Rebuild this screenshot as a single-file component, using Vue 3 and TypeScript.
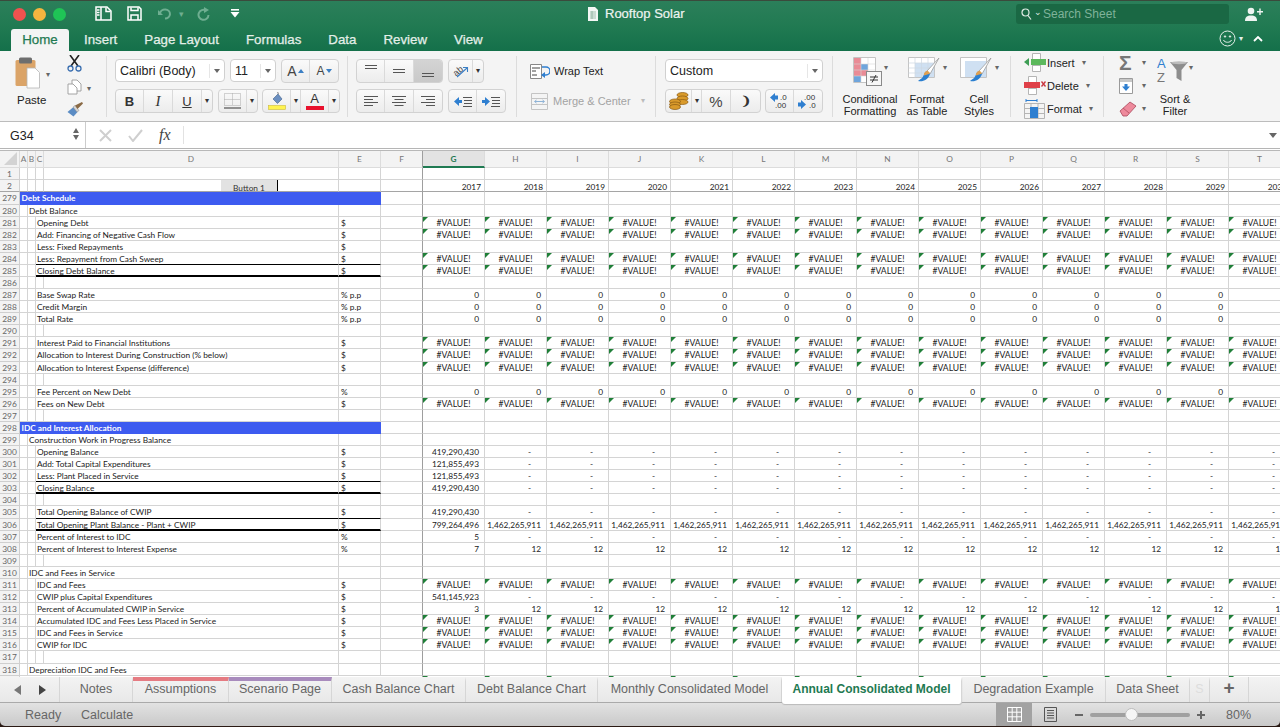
<script setup lang="ts">
interface Row {
  n: number
  band?: boolean
  level?: 'b' | 'c'
  label?: string
  unit?: string
  values?: string[]
  line?: 'thin' | 'thick'
}

const letters = ['G', 'H', 'I', 'J', 'K', 'L', 'M', 'N', 'O', 'P', 'Q', 'R', 'S', 'T']
const years = letters.map((_, i) => String(2017 + i))

// first value in column G, the rest repeat
const fill = (first: string, rest: string = first): string[] => [first, ...Array(13).fill(rest)]
const errs = fill('#VALUE!')
const zeros = [...Array(13).fill('0'), '']

const rows: Row[] = [
  { n: 279, band: true, label: 'Debt Schedule' },
  { n: 280, level: 'b', label: 'Debt Balance' },
  { n: 281, level: 'c', label: 'Opening Debt', unit: '$', values: errs },
  { n: 282, level: 'c', label: 'Add: Financing of Negative Cash Flow', unit: '$', values: errs },
  { n: 283, level: 'c', label: 'Less: Fixed Repayments', unit: '$' },
  { n: 284, level: 'c', label: 'Less: Repayment from Cash Sweep', unit: '$', values: errs, line: 'thin' },
  { n: 285, level: 'c', label: 'Closing Debt Balance', unit: '$', values: errs, line: 'thick' },
  { n: 286 },
  { n: 287, level: 'c', label: 'Base Swap Rate', unit: '% p.p', values: zeros },
  { n: 288, level: 'c', label: 'Credit Margin', unit: '% p.p', values: zeros },
  { n: 289, level: 'c', label: 'Total Rate', unit: '% p.p', values: zeros },
  { n: 290 },
  { n: 291, level: 'c', label: 'Interest Paid to Financial Institutions', unit: '$', values: errs },
  { n: 292, level: 'c', label: 'Allocation to Interest During Construction (% below)', unit: '$', values: errs },
  { n: 293, level: 'c', label: 'Allocation to Interest Expense (difference)', unit: '$', values: errs },
  { n: 294 },
  { n: 295, level: 'c', label: 'Fee Percent on New Debt', unit: '%', values: zeros },
  { n: 296, level: 'c', label: 'Fees on New Debt', unit: '$', values: errs },
  { n: 297 },
  { n: 298, band: true, label: 'IDC and Interest Allocation' },
  { n: 299, level: 'b', label: 'Construction Work in Progress Balance' },
  { n: 300, level: 'c', label: 'Opening Balance', unit: '$', values: fill('419,290,430', '-') },
  { n: 301, level: 'c', label: 'Add: Total Capital Expenditures', unit: '$', values: fill('121,855,493', '-') },
  { n: 302, level: 'c', label: 'Less: Plant Placed in Service', unit: '$', values: fill('121,855,493', '-'), line: 'thin' },
  { n: 303, level: 'c', label: 'Closing Balance', unit: '$', values: fill('419,290,430', '-'), line: 'thick' },
  { n: 304 },
  { n: 305, level: 'c', label: 'Total Opening Balance of CWIP', unit: '$', values: fill('419,290,430', '-'), line: 'thin' },
  { n: 306, level: 'c', label: 'Total Opening Plant Balance - Plant + CWIP', unit: '$', values: fill('799,264,496', '1,462,265,911'), line: 'thick' },
  { n: 307, level: 'c', label: 'Percent of Interest to IDC', unit: '%', values: fill('5', '-') },
  { n: 308, level: 'c', label: 'Percent of Interest to Interest Expense', unit: '%', values: fill('7', '12') },
  { n: 309 },
  { n: 310, level: 'b', label: 'IDC and Fees in Service' },
  { n: 311, level: 'c', label: 'IDC and Fees', unit: '$', values: errs },
  { n: 312, level: 'c', label: 'CWIP plus Capital Expenditures', unit: '$', values: fill('541,145,923', '-') },
  { n: 313, level: 'c', label: 'Percent of Accumulated CWIP in Service', unit: '$', values: fill('3', '12') },
  { n: 314, level: 'c', label: 'Accumulated IDC and Fees Less Placed in Service', unit: '$', values: errs },
  { n: 315, level: 'c', label: 'IDC and Fees in Service', unit: '$', values: errs },
  { n: 316, level: 'c', label: 'CWIP for IDC', unit: '$', values: errs },
  { n: 317 },
  { n: 318, level: 'b', label: 'Depreciation IDC and Fees' },
]

const valueAt = (row: Row, i: number): string => (row.values ? row.values[i] : '')

const cellClass = (val: string) => ({
  err: val === '#VALUE!',
  dash: val === '-',
})

const menuTabs = ['Insert', 'Page Layout', 'Formulas', 'Data', 'Review', 'View']

const sheets = [
  { name: 'Notes', width: 73 },
  { name: 'Assumptions', width: 96, color: '#e57b82' },
  { name: 'Scenario Page', width: 103, color: '#a88bbd' },
  { name: 'Cash Balance Chart', width: 134 },
  { name: 'Debt Balance Chart', width: 132 },
  { name: 'Monthly Consolidated Model', width: 184 },
  { name: 'Annual Consolidated Model', width: 180, active: true },
  { name: 'Degradation Example', width: 144 },
  { name: 'Data Sheet', width: 84 },
]
</script>

<template>
  <div class="app">
    <header class="title-bar">
      <div class="lights">
        <span class="light red"></span>
        <span class="light yellow"></span>
        <span class="light green"></span>
      </div>
      <div class="quick">
        <svg width="17" height="15" viewBox="0 0 17 15" fill="none" stroke="#fff" stroke-width="1.5">
          <path d="M1 1h11l4 4v9H1z" />
          <path d="M6 1v13M2 4h2.500M2 6.500h2.500M2 9h2.500M11 1.500v4h4.500" />
        </svg>
        <svg class="q-save" width="15" height="15" viewBox="0 0 15 15" fill="none" stroke="#fff" stroke-width="1.500">
          <path d="M1 1h11l2 2v11H1z" />
          <path d="M4 1.500v3h7v-3M4 14V9h7v5" />
        </svg>
        <svg class="q-undo" width="17" height="13" viewBox="0 0 17 13" fill="none" stroke="#6fae91" stroke-width="2">
          <path d="M3 6.500a5 4.500 0 1 1 5 5" />
          <path d="M1 3v5h5z" fill="#6fae91" stroke="none" />
        </svg>
        <span class="q-caret">▾</span>
        <svg class="q-redo" width="13" height="14" viewBox="0 0 13 14" fill="none" stroke="#6fae91" stroke-width="2">
          <path d="M9 3.500a5 5 0 1 0 2.500 4.500" />
          <path d="M7 0v6l5-3z" fill="#6fae91" stroke="none" />
        </svg>
        <svg class="q-more" width="10" height="9" viewBox="0 0 10 9" fill="#fff">
          <rect x="1" y="0" width="8" height="1.600" />
          <path d="M0.500 3h9L5 8.500z" />
        </svg>
      </div>
      <div class="doc-title">
        <svg width="10" height="14" viewBox="0 0 10 14">
          <path d="M0 0h7l3 3v11H0z" fill="#f4f7f5" />
          <path d="M2 5h6M2 7h6M2 9h6M2 11h6M4 4v8" stroke="#7ea892" stroke-width="0.700" />
        </svg>
        <span>Rooftop Solar</span>
      </div>
      <div class="search">
        <svg width="11" height="12" viewBox="0 0 11 12" fill="none" stroke="#dfeae4" stroke-width="1.200">
          <circle cx="4.500" cy="4.500" r="3.500" />
          <path d="M7 7.500l3 4" />
        </svg>
        <span class="search-caret">⌄</span>
        <span class="search-text">Search Sheet</span>
      </div>
      <svg class="add-person" width="18" height="14" viewBox="0 0 18 14" fill="#eef4f1">
        <circle cx="6" cy="4" r="3.300" />
        <path d="M0 14c0-4 2-5.500 6-5.500s6 1.500 6 5.500z" />
        <path d="M12 4h2.300V1.500h1.400V4H18v1.400h-2.300V8h-1.400V5.400H12z" />
      </svg>
    </header>

    <nav class="menu-bar">
      <span class="menu-tab active">Home</span>
      <span v-for="tab in menuTabs" :key="tab" class="menu-tab">{{ tab }}</span>
      <div class="menu-right">
        <svg width="17" height="17" viewBox="0 0 17 17" fill="none" stroke="#e6f0eb" stroke-width="1">
          <circle cx="8.500" cy="8.500" r="7.500" />
          <circle cx="6" cy="6.500" r="0.700" fill="#e6f0eb" />
          <circle cx="11" cy="6.500" r="0.700" fill="#e6f0eb" />
          <path d="M4.500 10c1 3 7 3 8 0" />
        </svg>
        <span class="mini-caret">▾</span>
        <svg class="chev" width="10" height="6" viewBox="0 0 10 6" fill="none" stroke="#fff" stroke-width="1.800">
          <path d="M1 5l4-4 4 4" />
        </svg>
      </div>
    </nav>

    <section class="ribbon">
      <div class="group g-paste">
        <div class="paste">
          <svg width="25" height="32" viewBox="0 0 25 32">
            <rect x="0.500" y="3" width="20" height="26" rx="1.500" fill="#dba468" />
            <rect x="4" y="0.500" width="13" height="6" rx="1.500" fill="#6e6e6e" />
            <path d="M12 11h8l4.500 4.500V31H12z" fill="#fff" stroke="#b5b5b5" stroke-width="0.800" />
          </svg>
          <span class="caret paste-caret">▾</span>
          <span class="paste-label">Paste</span>
        </div>
        <div class="clip-tools">
          <svg width="15" height="17" viewBox="0 0 15 17" fill="none">
            <path d="M3 0l8 11M12 0L4 11" stroke="#222" stroke-width="1.600" />
            <circle cx="3.500" cy="13.500" r="2.500" stroke="#3b6fb0" stroke-width="1.300" />
            <circle cx="11.500" cy="13.500" r="2.500" stroke="#3b6fb0" stroke-width="1.300" />
          </svg>
          <div class="copy-row">
            <svg width="15" height="16" viewBox="0 0 15 16" fill="#fff" stroke="#9a9a9a" stroke-width="0.900">
              <path d="M5 1h5l4 4v7H5z" />
              <path d="M1 5h5l4 4v6H1z" />
            </svg>
            <span class="caret">▾</span>
          </div>
          <svg width="17" height="15" viewBox="0 0 17 15">
            <path d="M0.500 10l6-5 4 5-4 4.500z" fill="#5b8cc4" />
            <path d="M6 5l4 5 2-1.500-4-5z" fill="#d6d6d6" stroke="#888" stroke-width="0.500" />
            <path d="M8 3.500l7-3.500 1 1.500-5.500 5.500z" fill="#8a6a45" />
          </svg>
        </div>
      </div>

      <div class="group g-font">
        <div class="line">
          <div class="select font-name"><span>Calibri (Body)</span><i class="sel-arrow"></i></div>
          <div class="select font-size"><span>11</span><i class="sel-arrow"></i></div>
          <div class="btns">
            <span class="btn w29 size-btn big">A<b class="up"></b></span>
            <span class="btn w29 size-btn">A<b class="down"></b></span>
          </div>
        </div>
        <div class="line">
          <div class="btns">
            <span class="btn w29 fmt bold">B</span>
            <span class="btn w30 fmt ital">I</span>
            <span class="btn w30 fmt under">U</span>
            <span class="btn w10 caret">▾</span>
          </div>
          <div class="btns">
            <span class="btn w29">
              <svg width="17" height="16" viewBox="0 0 17 16" fill="none">
                <path d="M0.500 0.500h16v12h-16zM8.500 0.500v12M0.500 6.500h16" stroke="#aaa" stroke-dasharray="1 1" />
                <path d="M0 15h17" stroke="#333" stroke-width="1.200" />
              </svg>
            </span>
            <span class="btn w10 caret">▾</span>
          </div>
          <div class="btns pull">
            <span class="btn w29">
              <svg width="18" height="18" viewBox="0 0 18 18">
                <path d="M5 7l5-5 4 5-4.500 4.500z" fill="#6b8fc0" stroke="#3f5f8a" stroke-width="0.600" />
                <path d="M9 1l1-1 1 2z" fill="#555" />
                <rect x="0.500" y="13.500" width="17" height="4" fill="#fff34f" stroke="#cdbb3a" stroke-width="0.600" />
              </svg>
            </span>
            <span class="btn w10 caret">▾</span>
            <span class="btn w29 color-a">A<i></i></span>
            <span class="btn w10 caret">▾</span>
          </div>
        </div>
      </div>

      <div class="group g-align">
        <div class="line">
          <div class="btns">
            <span class="btn w29"><svg width="14" height="14" viewBox="0 0 14 14" stroke="#555"><path d="M1 1.500h12M1 4.500h12" /></svg></span>
            <span class="btn w30"><svg width="14" height="14" viewBox="0 0 14 14" stroke="#555"><path d="M1 5.500h12M1 8.500h12" /></svg></span>
            <span class="btn w29 pressed"><svg width="14" height="14" viewBox="0 0 14 14" stroke="#555"><path d="M1 9.500h12M1 12.500h12" /></svg></span>
          </div>
          <div class="btns">
            <span class="btn w24">
              <svg width="17" height="16" viewBox="0 0 17 16" fill="none">
                <text x="1" y="11" transform="rotate(-40 6 8)" class="ab">ab</text>
                <path d="M5 14L15 5M11 4.500h4.500V9" stroke="#3b7fc4" stroke-width="1.100" />
              </svg>
            </span>
            <span class="btn w10 caret">▾</span>
          </div>
        </div>
        <div class="line">
          <div class="btns">
            <span class="btn w29"><svg width="16" height="12" viewBox="0 0 16 12" stroke="#555"><path d="M1 1.500h14M1 4.500h9M1 7.500h14M1 10.500h9" /></svg></span>
            <span class="btn w30"><svg width="16" height="12" viewBox="0 0 16 12" stroke="#555"><path d="M1 1.500h14M3.500 4.500h9M1 7.500h14M3.500 10.500h9" /></svg></span>
            <span class="btn w29"><svg width="16" height="12" viewBox="0 0 16 12" stroke="#555"><path d="M1 1.500h14M6 4.500h9M1 7.500h14M6 10.500h9" /></svg></span>
          </div>
          <div class="btns">
            <span class="btn w29">
              <svg width="18" height="11" viewBox="0 0 18 11">
                <path d="M0 5.500L5 1v3h3v3H5v3z" fill="#2f7fd0" />
                <path d="M9 1.500h9M10 4.500h8M10 7.500h8M9 10.500h9" stroke="#555" />
              </svg>
            </span>
            <span class="btn w29">
              <svg width="18" height="11" viewBox="0 0 18 11">
                <path d="M8 5.500L3 1v3H0v3h3v3z" fill="#2f7fd0" />
                <path d="M9 1.500h9M10 4.500h8M10 7.500h8M9 10.500h9" stroke="#555" />
              </svg>
            </span>
          </div>
        </div>
      </div>

      <div class="group g-wrap">
        <div class="wrap-row">
          <svg width="20" height="17" viewBox="0 0 20 17" fill="none">
            <path d="M0.500 1.500h11v14h-11z" stroke="#888" fill="#fff" />
            <path d="M2 5h8M2 8h4M2 12h5" stroke="#444" />
            <path d="M12 4h4a3 3 0 0 1 0 8h-2" stroke="#2f7fd0" stroke-width="1.500" />
            <path d="M15 9l-4 3 4 3z" fill="#2f7fd0" />
          </svg>
          <span>Wrap Text</span>
        </div>
        <div class="wrap-row merge">
          <svg width="17" height="17" viewBox="0 0 17 17" fill="none">
            <path d="M0.500 0.500h16v16h-16zM0.500 5.500h16M0.500 11.500h16" stroke="#c4c4c4" />
            <path d="M4 8.500h9M5.500 7l-2 1.500 2 1.500M11.500 7l2 1.500-2 1.500" stroke="#8fb3d6" />
          </svg>
          <span>Merge &amp; Center</span>
          <span class="caret merge-caret">▾</span>
        </div>
      </div>

      <div class="group g-number">
        <div class="line">
          <div class="select num-format"><span>Custom</span><i class="sel-arrow"></i></div>
        </div>
        <div class="line tight">
          <div class="btns">
            <span class="btn w26">
              <svg width="20" height="18" viewBox="0 0 20 18" fill="#d99a2b" stroke="#8a5a12" stroke-width="0.700">
                <ellipse cx="13.500" cy="3" rx="5.500" ry="2.500" />
                <ellipse cx="13.500" cy="6.500" rx="5.500" ry="2.500" />
                <ellipse cx="13.500" cy="10" rx="5.500" ry="2.500" />
                <ellipse cx="6" cy="9.500" rx="5.500" ry="2.500" />
                <ellipse cx="6" cy="12.500" rx="5.500" ry="2.500" />
                <ellipse cx="6" cy="15" rx="5.500" ry="2.500" />
              </svg>
            </span>
            <span class="btn w10 caret">▾</span>
            <span class="btn w30 pct">%</span>
            <span class="btn w30 comma">❩</span>
          </div>
          <div class="btns">
            <span class="btn w29 dec">
              <svg width="20" height="16" viewBox="0 0 20 16">
                <path d="M0 4.500L5 0v2.500h3v4H5V9z" fill="#2f7fd0" />
                <text x="10" y="7" class="dec-t">.0</text>
                <text x="5" y="15" class="dec-t">.00</text>
              </svg>
            </span>
            <span class="btn w29 dec">
              <svg width="20" height="16" viewBox="0 0 20 16">
                <text x="6" y="6.500" class="dec-t">.00</text>
                <path d="M8 11.500L3 7v2.500H0v4h3V16z" fill="#2f7fd0" />
                <text x="11" y="15" class="dec-t">.0</text>
              </svg>
            </span>
          </div>
        </div>
      </div>

      <div class="group g-styles">
        <div class="style-item s-cond">
          <div class="style-icon">
            <svg width="29" height="29" viewBox="0 0 29 29">
              <path d="M0.500 0.500h22v25h-22z" fill="#fff" stroke="#c4c4c4" />
              <rect x="1" y="1" width="7" height="6" fill="#e98b96" />
              <rect x="8" y="7" width="7" height="6" fill="#6fa5dc" />
              <rect x="1" y="7" width="7" height="6" fill="#e98b96" />
              <rect x="1" y="13" width="14" height="6" fill="#e98b96" />
              <rect x="1" y="19" width="7" height="6" fill="#6fa5dc" />
              <path d="M8 1v24M15 1v24M1 7h21M1 13h21M1 19h21" stroke="#d6d6d6" stroke-width="0.600" />
              <rect x="13.500" y="14.500" width="15" height="14" fill="#f7f7f7" stroke="#8a8a8a" />
              <path d="M17 20h8M17 23h8M23 18l-4 7.500" stroke="#333" fill="none" />
            </svg>
            <span class="caret">▾</span>
          </div>
          <span class="style-label">Conditional<br />Formatting</span>
        </div>
        <div class="style-item s-table">
          <div class="style-icon">
            <svg width="33" height="30" viewBox="0 0 33 30">
              <path d="M0.500 1.500h26v20h-26z" fill="#fff" stroke="#c4c4c4" />
              <rect x="7" y="7" width="19" height="14" fill="#cfe0f2" />
              <path d="M7 1.500v20M13.500 1.500v20M20 1.500v20M0.500 7h26M0.500 12h26M0.500 17h26" stroke="#cdd7e2" stroke-width="0.700" />
              <path d="M31 2L19 15l3 3z" fill="#fff" stroke="#9a9a9a" stroke-width="0.800" />
              <path d="M19 15c-3 1-3 5-5 7-1 1-3 2-4 3 5 1 10-1 12-7z" fill="#2b7fd0" />
              <path d="M19.500 14.500c-3 1-4 3-3.500 5l5-1.500 1-1z" fill="#e0a050" />
            </svg>
            <span class="caret">▾</span>
          </div>
          <span class="style-label">Format<br />as Table</span>
        </div>
        <div class="style-item s-cell">
          <div class="style-icon">
            <svg width="33" height="30" viewBox="0 0 33 30">
              <path d="M0.500 1.500h26v20h-26z" fill="#fff" stroke="#c4c4c4" />
              <rect x="5" y="5" width="21" height="16" fill="#cfe0f2" />
              <path d="M31 2L19 15l3 3z" fill="#fff" stroke="#9a9a9a" stroke-width="0.800" />
              <path d="M19 15c-3 1-3 5-5 7-1 1-3 2-4 3 5 1 10-1 12-7z" fill="#2b7fd0" />
              <path d="M19.500 14.500c-3 1-4 3-3.500 5l5-1.500 1-1z" fill="#e0a050" />
            </svg>
            <span class="caret">▾</span>
          </div>
          <span class="style-label">Cell<br />Styles</span>
        </div>
      </div>

      <div class="group g-cells">
        <div class="cell-row">
          <svg width="23" height="20" viewBox="0 0 23 20" fill="none">
            <path d="M8.500 0.500h8v18h-8zM8.500 6.500h8M8.500 12.500h8" stroke="#b5b5b5" fill="#fff" />
            <rect x="7" y="6" width="15" height="6" fill="#5cb85c" />
            <path d="M0 9l5-4v8z" fill="#3f9e55" />
          </svg>
          <span>Insert</span><span class="caret">▾</span>
        </div>
        <div class="cell-row">
          <svg width="23" height="20" viewBox="0 0 23 20" fill="none">
            <path d="M4.500 0.500h8v18h-8zM4.500 12.500h8" stroke="#b5b5b5" fill="#fff" />
            <rect x="0" y="6" width="16" height="6" fill="#df4048" />
            <path d="M17.500 5.500l4 5M21.500 5.500l-4 5" stroke="#c9343c" stroke-width="1.300" />
          </svg>
          <span>Delete</span><span class="caret">▾</span>
        </div>
        <div class="cell-row">
          <svg width="23" height="20" viewBox="0 0 23 20" fill="none">
            <path d="M0.500 4.500h20v15h-20zM7 4.500v15M14 4.500v15M0.500 9.500h20M0.500 14.500h20" stroke="#b5b5b5" />
            <rect x="6" y="8" width="8" height="11" fill="#2f7fd0" />
            <path d="M2 1.500h11M2 0v3M13 0v3" stroke="#2f7fd0" />
          </svg>
          <span>Format</span><span class="caret">▾</span>
        </div>
      </div>

      <div class="group g-edit">
        <div class="edit-tools">
          <div class="edit-row">
            <span class="sigma">Σ</span><span class="caret">▾</span>
          </div>
          <div class="edit-row">
            <svg width="14" height="16" viewBox="0 0 14 16" fill="none">
              <path d="M0.500 0.500h13v15h-13z" fill="#fff" stroke="#9a9a9a" />
              <rect x="1" y="1" width="12" height="3" fill="#c8c8c8" />
              <path d="M7 13L3 8.500h2.500V6h3v2.500H11z" fill="#2f7fd0" />
            </svg>
            <span class="caret">▾</span>
          </div>
          <div class="edit-row">
            <svg width="18" height="16" viewBox="0 0 18 16">
              <path d="M1 10L11 1l6 4-9 10H4z" fill="#ee8a9c" stroke="#a9475a" stroke-width="0.800" />
              <path d="M4 7l6 5" stroke="#a9475a" stroke-width="0.700" />
            </svg>
            <span class="caret">▾</span>
          </div>
        </div>
        <div class="sort">
          <div class="sort-icon">
            <span class="az"><b>A</b><em>Z</em></span>
            <svg width="18" height="21" viewBox="0 0 18 21">
              <path d="M0 1h18l-6.500 8v11l-5-3V9z" fill="#8d8d8d" />
              <ellipse cx="9" cy="1.800" rx="8" ry="1.500" fill="#bdbdbd" />
            </svg>
            <span class="caret">▾</span>
          </div>
          <span class="style-label">Sort &amp;<br />Filter</span>
        </div>
      </div>
    </section>

    <div class="formula-bar">
      <div class="name-box">
        <span>G34</span>
        <span class="stepper"><i></i><i class="dn"></i></span>
      </div>
      <svg class="fb-x" width="13" height="13" viewBox="0 0 13 13" stroke="#cfcfcf" stroke-width="2"><path d="M1 1l11 11M12 1L1 12" /></svg>
      <svg class="fb-check" width="15" height="13" viewBox="0 0 15 13" fill="none" stroke="#cfcfcf" stroke-width="2"><path d="M1 7l4 5 9-11" /></svg>
      <span class="fx">fx</span>
      <span class="fb-arrow"></span>
    </div>
    <div class="fb-gap"></div>

    <main class="sheet">
      <div class="row head">
        <div class="c rh corner"><i></i></div>
        <div class="c w8">A</div>
        <div class="c w8">B</div>
        <div class="c w8">C</div>
        <div class="c wd">D</div>
        <div class="c we">E</div>
        <div class="c wf">F</div>
        <div v-for="(l, i) in letters" :key="l" class="c wv" :class="{ sel: i === 0 }">{{ l }}</div>
      </div>

      <div class="row">
        <div class="c rh">1</div>
        <div class="c w8"></div>
        <div class="c w8"></div>
        <div class="c w8"></div>
        <div class="c wd"></div>
        <div class="c we"></div>
        <div class="c wf freeze"></div>
        <div v-for="l in letters" :key="l" class="c wv"></div>
      </div>
      <div class="row frozen-end">
        <div class="c rh">2</div>
        <div class="c w8"></div>
        <div class="c w8"></div>
        <div class="c w8"></div>
        <div class="c wd button-cell"><span class="sheet-button">Button 1</span></div>
        <div class="c we"></div>
        <div class="c wf freeze"></div>
        <div v-for="y in years" :key="y" class="c wv year">{{ y }}</div>
      </div>

      <div v-for="row in rows" :key="row.n" class="row">
        <div class="c rh">{{ row.n }}</div>
        <template v-if="row.band">
          <div class="c band">{{ row.label }}</div>
        </template>
        <template v-else>
          <div class="c w8"></div>
          <template v-if="row.level === 'b'">
            <div class="c text span-b">{{ row.label }}</div>
          </template>
          <template v-else-if="row.level === 'c'">
            <div class="c w8"></div>
            <div class="c text span-c" :class="row.line">{{ row.label }}</div>
          </template>
          <template v-else>
            <div class="c w8"></div>
            <div class="c w8"></div>
            <div class="c wd"></div>
          </template>
          <div class="c we unit" :class="row.line">{{ row.unit }}</div>
        </template>
        <div class="c wf freeze"></div>
        <div v-for="(_, i) in letters" :key="i" class="c wv val" :class="cellClass(valueAt(row, i))">{{ valueAt(row, i) }}</div>
      </div>

      <!-- only the error ticks of the next row still show above the tabs -->
      <div class="row">
        <div class="c rh"></div>
        <div class="c gutter"></div>
        <div v-for="l in letters" :key="l" class="c wv val err"></div>
      </div>
    </main>

    <div class="sheet-tabs">
      <div class="tab-nav">
        <i class="nav-l"></i>
        <i class="nav-r"></i>
      </div>
      <div
        v-for="s in sheets"
        :key="s.name"
        class="sheet-tab"
        :class="{ active: s.active }"
        :style="{ width: s.width + 'px', borderTopColor: s.color || 'transparent' }"
      >{{ s.name }}</div>
      <div class="sheet-tab faded">S</div>
      <div class="tab-add">+</div>
    </div>

    <footer class="status">
      <span class="st-ready">Ready</span>
      <span class="st-calc">Calculate</span>
      <div class="view-btn on">
        <svg width="15" height="15" viewBox="0 0 15 15" fill="none" stroke="#fff"><path d="M0.500 0.500h14v14h-14zM5.200 0.500v14M9.800 0.500v14M0.500 5.200h14M0.500 9.800h14" /></svg>
      </div>
      <div class="view-btn">
        <svg width="13" height="15" viewBox="0 0 13 15" fill="none" stroke="#555"><path d="M0.500 0.500h12v14h-12zM3 3.500h7M3 6h7M3 8.500h7M3 11h7" /></svg>
      </div>
      <span class="zoom-sign minus"></span>
      <div class="slider"><i class="thumb"></i></div>
      <span class="zoom-sign plus"></span>
      <span class="zoom-val">80%</span>
    </footer>
  </div>
</template>

<style scoped>
.app {
  width: 1280px;
  height: 727px;
  display: flex;
  flex-direction: column;
  overflow: hidden;
  background: #2a1a14;
  font-family: "Liberation Sans", Arial, sans-serif;
}

/* title + menu */
.title-bar {
  height: 26px;
  flex: none;
  display: flex;
  align-items: center;
  background: linear-gradient(#2b7f5a, #217a52);
  border-top: 1px solid #3a4a3c;
  box-sizing: border-box;
}
.lights { display: flex; gap: 7px; margin-left: 13px; width: 82px; flex: none; margin-top: 1px; }
.light { width: 13px; height: 13px; border-radius: 50%; }
.light.red { background: #f0524f; }
.light.yellow { background: #f5b53f; }
.light.green { background: #1fc456; }
.quick { display: flex; align-items: center; width: 493px; flex: none; }
.q-save { margin-left: 15px; }
.q-undo { margin-left: 15px; }
.q-caret { color: #6fae91; font-size: 9px; margin-left: 5px; width: 13px; }
.q-redo { margin-left: 5px; }
.q-more { margin-left: 20px; }
.doc-title { display: flex; align-items: center; gap: 7px; width: 428px; flex: none; color: #eef4f1; font-size: 13px; -webkit-text-stroke: 0.2px #eef4f1; }
.search {
  width: 213px;
  height: 20px;
  flex: none;
  display: flex;
  align-items: center;
  background: #1a6844;
  border-radius: 3px;
  box-sizing: border-box;
  padding-left: 5px;
}
.search-caret { color: #dfeae4; font-size: 9px; margin: -4px 0 0 2px; width: 9px; }
.search-text { color: #7fb29a; font-size: 12px; }
.add-person { margin-left: 16px; }

.menu-bar {
  height: 25px;
  flex: none;
  display: flex;
  align-items: flex-end;
  background: linear-gradient(#217a52, #14704a);
  padding-left: 11px;
  box-sizing: border-box;
}
.menu-tab {
  color: #e4efe9;
  font-size: 13.300px;
  -webkit-text-stroke: 0.25px currentColor;
  height: 22px;
  line-height: 22px;
  margin-right: 27px;
}
.menu-tab.active {
  width: 58px;
  text-align: center;
  background: #f4f4f4;
  color: #1f7a52;
  border-radius: 3px 3px 0 0;
  margin-right: 15px;
}
.menu-right { margin-left: auto; display: flex; align-items: center; height: 25px; padding-right: 17px; }
.mini-caret { color: #e6f0eb; font-size: 8px; margin: 0 10px 0 3px; }

/* ribbon */
.ribbon {
  height: 71px;
  flex: none;
  display: flex;
  background: #f4f4f4;
  border-bottom: 1px solid #bcbcbc;
  box-sizing: border-box;
  align-items: flex-start;
}
.group {
  height: 61px;
  margin-top: 5px;
  border-right: 1px solid #dcdcdc;
  box-sizing: border-box;
  flex: none;
}
.caret { color: #666; font-size: 8px; line-height: 1; }
.g-paste { width: 107px; display: flex; }
.paste { width: 60px; padding: 0 0 0 15px; box-sizing: border-box; display: flex; flex-wrap: wrap; align-items: center; align-content: flex-start; }
.paste svg { margin-top: 1px; }
.paste-caret { margin-left: 6px; margin-top: 4px; }
.paste-label { width: 100%; font-size: 11.500px; line-height: 13px; color: #222; margin: 5px 0 0 2px; }
.clip-tools { display: flex; flex-direction: column; gap: 7px; padding-left: 7px; margin-top: -1px; }
.copy-row { display: flex; align-items: center; gap: 5px; }
.copy-row .caret { margin-top: 3px; }

.g-font { width: 241px; padding: 3px 0 0 8px; }
.g-align { width: 169px; padding: 3px 0 0 8px; }
.line { display: flex; gap: 5px; height: 24px; margin-bottom: 6px; }
.pull { margin-left: -1px; }
.select {
  height: 23px;
  background: #fff;
  border: 1px solid #d0d0d0;
  border-radius: 4px;
  box-sizing: border-box;
  display: flex;
  align-items: center;
  padding-left: 4px;
  font-size: 12.500px;
  color: #222;
}
.sel-arrow {
  margin-left: auto;
  width: 14px;
  height: 14px;
  border-left: 1px solid #e6e6e6;
  position: relative;
}
.sel-arrow::after {
  content: "";
  position: absolute;
  left: 4px;
  top: 5px;
  border: 3px solid transparent;
  border-top: 4px solid #666;
  border-bottom: 0;
}
.font-name { width: 110px; }
.font-size { width: 46px; }
.num-format { width: 158px; padding-left: 4px; }
.btns {
  height: 24px;
  display: flex;
  background: linear-gradient(#fafafa, #ececec);
  border: 1px solid #d2d2d2;
  border-radius: 4px;
  box-sizing: border-box;
  overflow: hidden;
  flex: none;
}
.btn {
  display: flex;
  align-items: center;
  justify-content: center;
  border-right: 1px solid #dadada;
  box-sizing: border-box;
  height: 100%;
  color: #333;
}
.btn:last-child { border-right: 0; }
.btn.pressed { background: linear-gradient(#d4d4d4, #c9c9c9); }
.w10 { width: 10px; }
.w24 { width: 24px; }
.w26 { width: 26px; }
.w29 { width: 28px; }
.w30 { width: 29px; }
.size-btn { font-size: 12px; gap: 1px; color: #444; }
.size-btn.big { font-size: 14px; }
.size-btn b { display: block; border: 3.500px solid transparent; }
.size-btn .up { border-bottom: 4px solid #3b7fc4; border-top: 0; }
.size-btn .down { border-top: 4px solid #3b7fc4; border-bottom: 0; }
.fmt { font-size: 13px; color: #333; }
.bold { font-weight: bold; }
.ital { font-family: "Liberation Serif", serif; font-style: italic; font-size: 15px; }
.under { text-decoration: underline; }
.color-a {
  flex-direction: column;
  font-size: 13px;
  line-height: 12px;
  color: #333;
  padding-top: 1px;
}
.color-a i { display: block; width: 18px; height: 4px; background: #e8112d; margin-top: 1px; }
.ab { font-size: 9px; fill: #444; }
.pct { font-size: 15px; color: #444; }
.comma { font-size: 12px; color: #333; font-weight: bold; }
.dec-t { font-size: 8px; fill: #333; }

.g-wrap { width: 139px; padding: 5px 0 0 13px; }
.wrap-row { display: flex; align-items: center; gap: 4px; font-size: 11px; color: #222; height: 20px; margin-bottom: 10px; }
.wrap-row.merge { color: #a3a3a3; margin-left: 1px; gap: 5px; }
.merge-caret { margin-left: 5px; color: #bbb; }

.g-number { width: 177px; padding: 3px 0 0 9px; }
.tight { gap: 4px; }

.g-styles { width: 178px; display: flex; }
.style-item { display: flex; flex-direction: column; align-items: center; flex: none; }
.s-cond { width: 74px; }
.s-table { width: 46px; margin-left: -3px; }
.s-cell { width: 46px; margin-left: 6px; }
.style-icon { height: 32px; display: flex; align-items: center; gap: 2px; }
.style-icon .caret { margin-top: -6px; }
.style-label { font-size: 11px; line-height: 12px; color: #222; text-align: center; margin-top: 7px; }

.g-cells { width: 93px; padding-left: 13px; display: flex; flex-direction: column; }
.cell-row { display: flex; align-items: center; height: 23px; flex: none; font-size: 11px; color: #222; margin-top: 0; }
.cell-row:first-child { margin-top: -5px; }
.cell-row .caret { margin-left: 7px; }

.g-edit { width: 176px; border-right: 0; display: flex; padding-left: 15px; }
.edit-tools { width: 27px; display: flex; flex-direction: column; flex: none; }
.edit-row { height: 23px; flex: none; display: flex; align-items: center; }
.edit-row:first-child { margin-top: -5px; }
.edit-row .caret { margin-left: auto; }
.sigma { font-size: 21px; font-weight: bold; color: #777; width: 15px; line-height: 20px; }
.sort { display: flex; flex-direction: column; align-items: center; width: 44px; margin-left: 7px; }
.sort-icon { display: flex; align-items: center; height: 32px; gap: 1px; }
.sort-icon .caret { margin-top: -6px; }
.az { display: flex; flex-direction: column; font-size: 13px; line-height: 14px; width: 12px; }
.az b { color: #2f7fd0; font-weight: normal; }
.az em { color: #777; font-style: normal; }

/* formula bar */
.formula-bar {
  height: 27px;
  flex: none;
  display: flex;
  align-items: center;
  background: #fff;
  border-bottom: 1px solid #b5b5b5;
  box-sizing: border-box;
}
.fb-gap { height: 1px; flex: none; background: #fff; }
.name-box {
  width: 86px;
  height: 100%;
  flex: none;
  display: flex;
  align-items: center;
  box-sizing: border-box;
  padding: 2px 0 0 10px;
  border-right: 1px solid #ccc;
  font-size: 12.500px;
  color: #222;
  position: relative;
}
.stepper { position: absolute; left: 73px; top: 6px; display: flex; flex-direction: column; gap: 2px; }
.stepper i { border: 3.500px solid transparent; border-bottom: 5px solid #666; border-top: 0; }
.stepper .dn { border-bottom: 0; border-top: 5px solid #666; }
.fb-x { margin-left: 13px; }
.fb-check { margin-left: 16px; }
.fx {
  font-family: "Liberation Serif", serif;
  font-style: italic;
  font-size: 16px;
  color: #444;
  margin-left: 16px;
  width: 24px;
  height: 18px;
  line-height: 18px;
  border-right: 1px solid #e2e2e2;
  flex: none;
}
.fb-arrow {
  margin-left: auto;
  margin-right: 3px;
  border: 4px solid transparent;
  border-top: 5px solid #666;
  border-bottom: 0;
}

/* sheet */
.sheet {
  height: 527px;
  flex: none;
  overflow: hidden;
  background: #fff;
  border-top: 1px solid #b8b8b8;
  box-sizing: border-box;
  font-family: Lato, "Liberation Sans", sans-serif;
  font-size: 8.300px;
  color: #1a1a1a;
}
.row { display: flex; height: 12.090px; width: 1300px; }
.row.head { height: 17.300px; background: #f3f3f3; color: #777; }
.c {
  flex: none;
  height: 100%;
  box-sizing: border-box;
  border-right: 1px solid #d4d4d4;
  border-bottom: 1px solid #d4d4d4;
  white-space: nowrap;
  overflow: hidden;
  line-height: 13px;
  position: relative;
}
.head .c { text-align: center; line-height: 17px; border-color: #dcdcdc; }
.rh { width: 20px; text-align: center; background: #f3f3f3; color: #666; border-color: #cfcfcf; font-size: 8.400px; }
.w8 { width: 8px; }
.wd { width: 295px; }
.we { width: 42px; }
.wf { width: 42px; }
.wv { width: 62px; }
.span-b { width: 311px; }
.span-c { width: 303px; }
.gutter { width: 403px; border-right-color: #9e9e9e; }
.corner i {
  position: absolute;
  right: 2px;
  bottom: 2px;
  border-left: 13px solid transparent;
  border-bottom: 13px solid #d3d3d3;
}
.head .sel {
  background: #e3e3e3;
  color: #1f7a52;
  font-weight: bold;
  border-bottom: 2px solid #1f7a52;
}
.freeze { border-right-color: #9e9e9e; }
.head .wf { border-right-color: #9e9e9e; }
.frozen-end .c { border-bottom-color: #a5a5a5; }
.text { padding-left: 1px; overflow: visible; }
.unit { padding-left: 2px; }
.band {
  width: 361px;
  background: #3d5bf0;
  color: #fff;
  font-weight: bold;
  padding-left: 1.500px;
  border-color: #3d5bf0;
}
.thin { border-bottom: 1px solid #000; }
.thick { border-bottom: 2px solid #000; }
.year { text-align: right; padding-right: 3px; overflow: hidden; line-height: 14px; }
.val { text-align: right; padding-right: 5px; }
.val.dash { padding-right: 15px; }
.val.err { text-align: center; padding-right: 0; font-size: 8.600px; }
.val.err::before {
  content: "";
  position: absolute;
  left: 0;
  top: 0;
  border-top: 5px solid #1f7f38;
  border-right: 5px solid transparent;
}
.button-cell { overflow: hidden; }
.sheet-button {
  position: absolute;
  left: 177px;
  top: 0;
  width: 57px;
  height: 12px;
  background: #e2e2e2;
  border-right: 1px solid #000;
  text-align: center;
  line-height: 16px;
  color: #333;
  box-sizing: border-box;
}

/* sheet tabs */
.sheet-tabs {
  height: 26px;
  flex: none;
  display: flex;
  background: linear-gradient(#f3f3f3, #e8e8e8);
  border-bottom: 1px solid #aaa;
  box-sizing: border-box;
  font-size: 12.500px;
  color: #666;
}
.tab-nav {
  width: 60px;
  flex: none;
  display: flex;
  align-items: center;
  justify-content: center;
  gap: 18px;
  border-right: 1px solid #d6d6d6;
  box-sizing: border-box;
}
.nav-l { border: 5px solid transparent; border-right: 7px solid #777; border-left: 0; }
.nav-r { border: 5px solid transparent; border-left: 7px solid #444; border-right: 0; }
.sheet-tab {
  flex: none;
  display: flex;
  align-items: center;
  justify-content: center;
  box-sizing: border-box;
  border-right: 1px solid #d6d6d6;
  border-top: 4px solid transparent;
  padding-bottom: 6px;
  height: 100%;
  white-space: nowrap;
}
.sheet-tab.active {
  background: #fff;
  color: #1f7a52;
  font-weight: bold;
  font-size: 12px;
  height: 27px;
  padding-bottom: 7px;
  border-radius: 0 0 3px 3px;
  box-shadow: 0 1px 1px #bbb;
  z-index: 1;
}
.sheet-tab.faded { width: 20px; color: #ddd; }
.tab-add {
  width: 39px;
  flex: none;
  display: flex;
  align-items: center;
  justify-content: center;
  font-size: 19px;
  color: #666;
  border-right: 1px solid #d6d6d6;
  box-sizing: border-box;
  font-weight: bold;
  padding-bottom: 4px;
}

/* status bar */
.status {
  height: 23px;
  flex: none;
  display: flex;
  align-items: center;
  background: linear-gradient(#e2e2e2, #c9c9c9);
  border-radius: 0 0 5px 5px;
  font-size: 12.500px;
  color: #666;
}
.st-ready { margin-left: 25px; width: 56px; }
.st-calc { width: 915px; }
.view-btn {
  width: 36px;
  height: 23px;
  flex: none;
  display: flex;
  align-items: center;
  justify-content: center;
}
.view-btn.on { background: #a2a2a2; }
.zoom-sign { width: 8px; height: 2px; background: #666; flex: none; position: relative; }
.minus { margin-left: 7px; }
.plus { margin-left: 7px; }
.plus::after { content: ""; position: absolute; left: 3px; top: -3px; width: 2px; height: 8px; background: #666; }
.slider {
  width: 100px;
  height: 4px;
  background: #a0a0a0;
  border-radius: 2px;
  margin-left: 7px;
  flex: none;
  position: relative;
}
.thumb {
  position: absolute;
  left: 35px;
  top: -5px;
  width: 13px;
  height: 13px;
  border-radius: 50%;
  background: #f6f6f6;
  border: 1px solid #bcbcbc;
  box-sizing: border-box;
}
.zoom-val { margin-left: 21px; }
</style>

<style>
html, body { margin: 0; background: #2a1a14; overflow: hidden; }
</style>
